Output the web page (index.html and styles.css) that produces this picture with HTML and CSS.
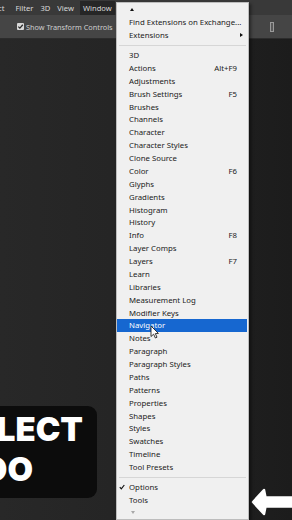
FILE: index.html
```html
<!DOCTYPE html>
<html>
<head>
<meta charset="utf-8">
<link rel="stylesheet" href="styles.css">
</head>
<body>
<div class="app">
  <div class="menubar">
    <span class="mb-item first">ct</span>
    <span class="mb-item">Filter</span>
    <span class="mb-item">3D</span>
    <span class="mb-item">View</span>
    <span class="mb-item active">Window</span>
  </div>
  <div class="optionsbar">
    <span class="chk"><svg viewBox="0 0 7 7" width="7" height="7"><path d="M1.3 3.6 L2.9 5.1 L5.8 1.8" fill="none" stroke="#2a2a2a" stroke-width="1.3"/></svg></span>
    <span class="opt-label">Show Transform Controls</span>
    <span class="spacer"></span>
    <span class="opt-marker"></span>
  </div>
  <div class="canvas">
    <div class="caption">
      <div class="cap-line cap-1"><span>SELECT</span></div>
      <div class="cap-line cap-2"><span>DO</span></div>
    </div>
    <svg class="arrow" viewBox="249 485 43 34" width="43" height="34">
      <path d="M253 502 L264 490 L265.5 497.5 L292 497.5 L292 506.5 L265.5 506.5 L264 514 Z" fill="#fff" stroke="#fff" stroke-width="2.5" stroke-linejoin="round"/>
    </svg>
  </div>

  <div class="menu">
    <div class="row arrow-row"><span class="tri-up"></span></div>
    <div class="row"><span>Find Extensions on Exchange...</span></div>
    <div class="row"><span>Extensions</span><span class="tri-right"></span></div>
    <div class="sep"></div>
    <div class="row"><span>3D</span></div>
    <div class="row"><span>Actions</span><span class="sc">Alt+F9</span></div>
    <div class="row"><span>Adjustments</span></div>
    <div class="row"><span>Brush Settings</span><span class="sc">F5</span></div>
    <div class="row"><span>Brushes</span></div>
    <div class="row"><span>Channels</span></div>
    <div class="row"><span>Character</span></div>
    <div class="row"><span>Character Styles</span></div>
    <div class="row"><span>Clone Source</span></div>
    <div class="row"><span>Color</span><span class="sc">F6</span></div>
    <div class="row"><span>Glyphs</span></div>
    <div class="row"><span>Gradients</span></div>
    <div class="row"><span>Histogram</span></div>
    <div class="row"><span>History</span></div>
    <div class="row"><span>Info</span><span class="sc">F8</span></div>
    <div class="row"><span>Layer Comps</span></div>
    <div class="row"><span>Layers</span><span class="sc">F7</span></div>
    <div class="row"><span>Learn</span></div>
    <div class="row"><span>Libraries</span></div>
    <div class="row"><span>Measurement Log</span></div>
    <div class="row"><span>Modifier Keys</span></div>
    <div class="row sel"><span>Navigator</span>
      <svg class="cursor" viewBox="0 0 9 14" width="9" height="14"><path d="M1 1 L1 11.5 L3.6 9.2 L5.4 13 L7 12.2 L5.3 8.6 L8.4 8.4 Z" fill="#fff" stroke="#222" stroke-width="0.9" stroke-linejoin="round"/></svg>
    </div>
    <div class="row"><span>Notes</span></div>
    <div class="row"><span>Paragraph</span></div>
    <div class="row"><span>Paragraph Styles</span></div>
    <div class="row"><span>Paths</span></div>
    <div class="row"><span>Patterns</span></div>
    <div class="row"><span>Properties</span></div>
    <div class="row"><span>Shapes</span></div>
    <div class="row"><span>Styles</span></div>
    <div class="row"><span>Swatches</span></div>
    <div class="row"><span>Timeline</span></div>
    <div class="row"><span>Tool Presets</span></div>
    <div class="sep"></div>
    <div class="row checked"><svg class="check" viewBox="0 0 6 6" width="6" height="6"><path d="M0.8 3.2 L2.3 4.8 L5.3 1" fill="none" stroke="#111" stroke-width="1.2"/></svg><span>Options</span></div>
    <div class="row"><span>Tools</span></div>
    <div class="row arrow-row"><span class="tri-down"></span></div>
  </div>
</div>
</body>
</html>
```

FILE: styles.css
```css
* { box-sizing: border-box; margin: 0; padding: 0; }
html, body { width: 292px; height: 520px; overflow: hidden; }
body { background: #232323; font-family: "Noto Sans", "Open Sans", sans-serif; }

.app {
  position: relative;
  width: 292px;
  height: 520px;
  display: flex;
  flex-direction: column;
}

/* top menu bar */
.menubar {
  height: 15px;
  background: #393939;
  display: flex;
  align-items: center;
  gap: 7px;
  font-size: 7.6px;
  color: #d9d9d9;
  white-space: nowrap;
}
.mb-item { line-height: 14px; }
.mb-item.first { margin-left: -2px; margin-right: 4px; }
.mb-item.active { background: #262626; padding: 0 3px; margin-left: -1px; }

/* options bar */
.optionsbar {
  height: 24px;
  background: #454545;
  border-bottom: 1px solid #2c2c2c;
  display: flex;
  align-items: center;
  padding-left: 17px;
  font-size: 7.3px;
  color: #cfcfcf;
}
.chk {
  width: 7px; height: 7px;
  background: #d8d8d8;
  border-radius: 1px;
  display: flex;
}
.opt-label { margin-left: 2px; }
.spacer { flex: 1; }
.opt-marker {
  width: 4px; height: 10px;
  border: 1px solid #9a9a9a;
  background: #5a5a5a;
  margin-right: 18px;
}

/* canvas */
.canvas {
  flex: 1;
  position: relative;
  background: linear-gradient(to right, #282828 0, #252525 110px, #1e1e1e 250px, #1c1c1c 292px);
}
.caption {
  position: absolute;
  left: 0;
  top: 367px;
  width: 97px;
  height: 92px;
  background: #0c0c0c;
  border-radius: 0 9px 9px 0;
  overflow: hidden;
  padding-top: 7px;
  display: flex;
  flex-direction: column;
  gap: 7px;
}
.cap-line {
  display: flex;
  justify-content: flex-end;
  font-family: Inter, "DejaVu Sans", sans-serif;
  font-weight: 900;
  font-size: 33px;
  line-height: 33px;
  color: #fff;
  white-space: nowrap;
}
.cap-1 { width: 83px; }
.cap-2 { width: 33px; }
.arrow { position: absolute; left: 249px; top: 446px; }

/* dropdown menu */
.menu {
  position: absolute;
  left: 116px;
  top: 2px;
  width: 133px;
  height: 518px;
  background: #f0f0f0;
  border: 1px solid #bdbdbd;
  box-shadow: 2px 2px 3px rgba(0,0,0,0.45);
  font-size: 7.8px;
  color: #1b1b1b;
  display: flex;
  flex-direction: column;
}
.row {
  position: relative;
  height: 12.875px;
  flex: none;
  display: flex;
  align-items: center;
  justify-content: space-between;
  padding: 0 11px 0 12px;
  white-space: nowrap;
}
.row.sel { background: #1667d0; color: #fff; margin-right: 1px; }
.sep {
  height: 7px;
  flex: none;
  display: flex;
  align-items: center;
  padding: 0 2px;
}
.sep::before { content: ""; flex: 1; height: 1px; background: #d6d6d6; }

.tri-up {
  width: 0; height: 0;
  border-left: 2.5px solid transparent;
  border-right: 2.5px solid transparent;
  border-bottom: 3px solid #111;
  margin-left: 1px;
}
.tri-down {
  width: 0; height: 0;
  border-left: 2.5px solid transparent;
  border-right: 2.5px solid transparent;
  border-top: 3px solid #a8a8a8;
  margin-left: 2px;
}
.tri-right {
  width: 0; height: 0;
  border-top: 2.5px solid transparent;
  border-bottom: 2.5px solid transparent;
  border-left: 3px solid #111;
  margin-right: -6px;
}
.check { position: absolute; left: 2px; top: 3.5px; }
.cursor { position: absolute; left: 33px; top: 6px; }
```
